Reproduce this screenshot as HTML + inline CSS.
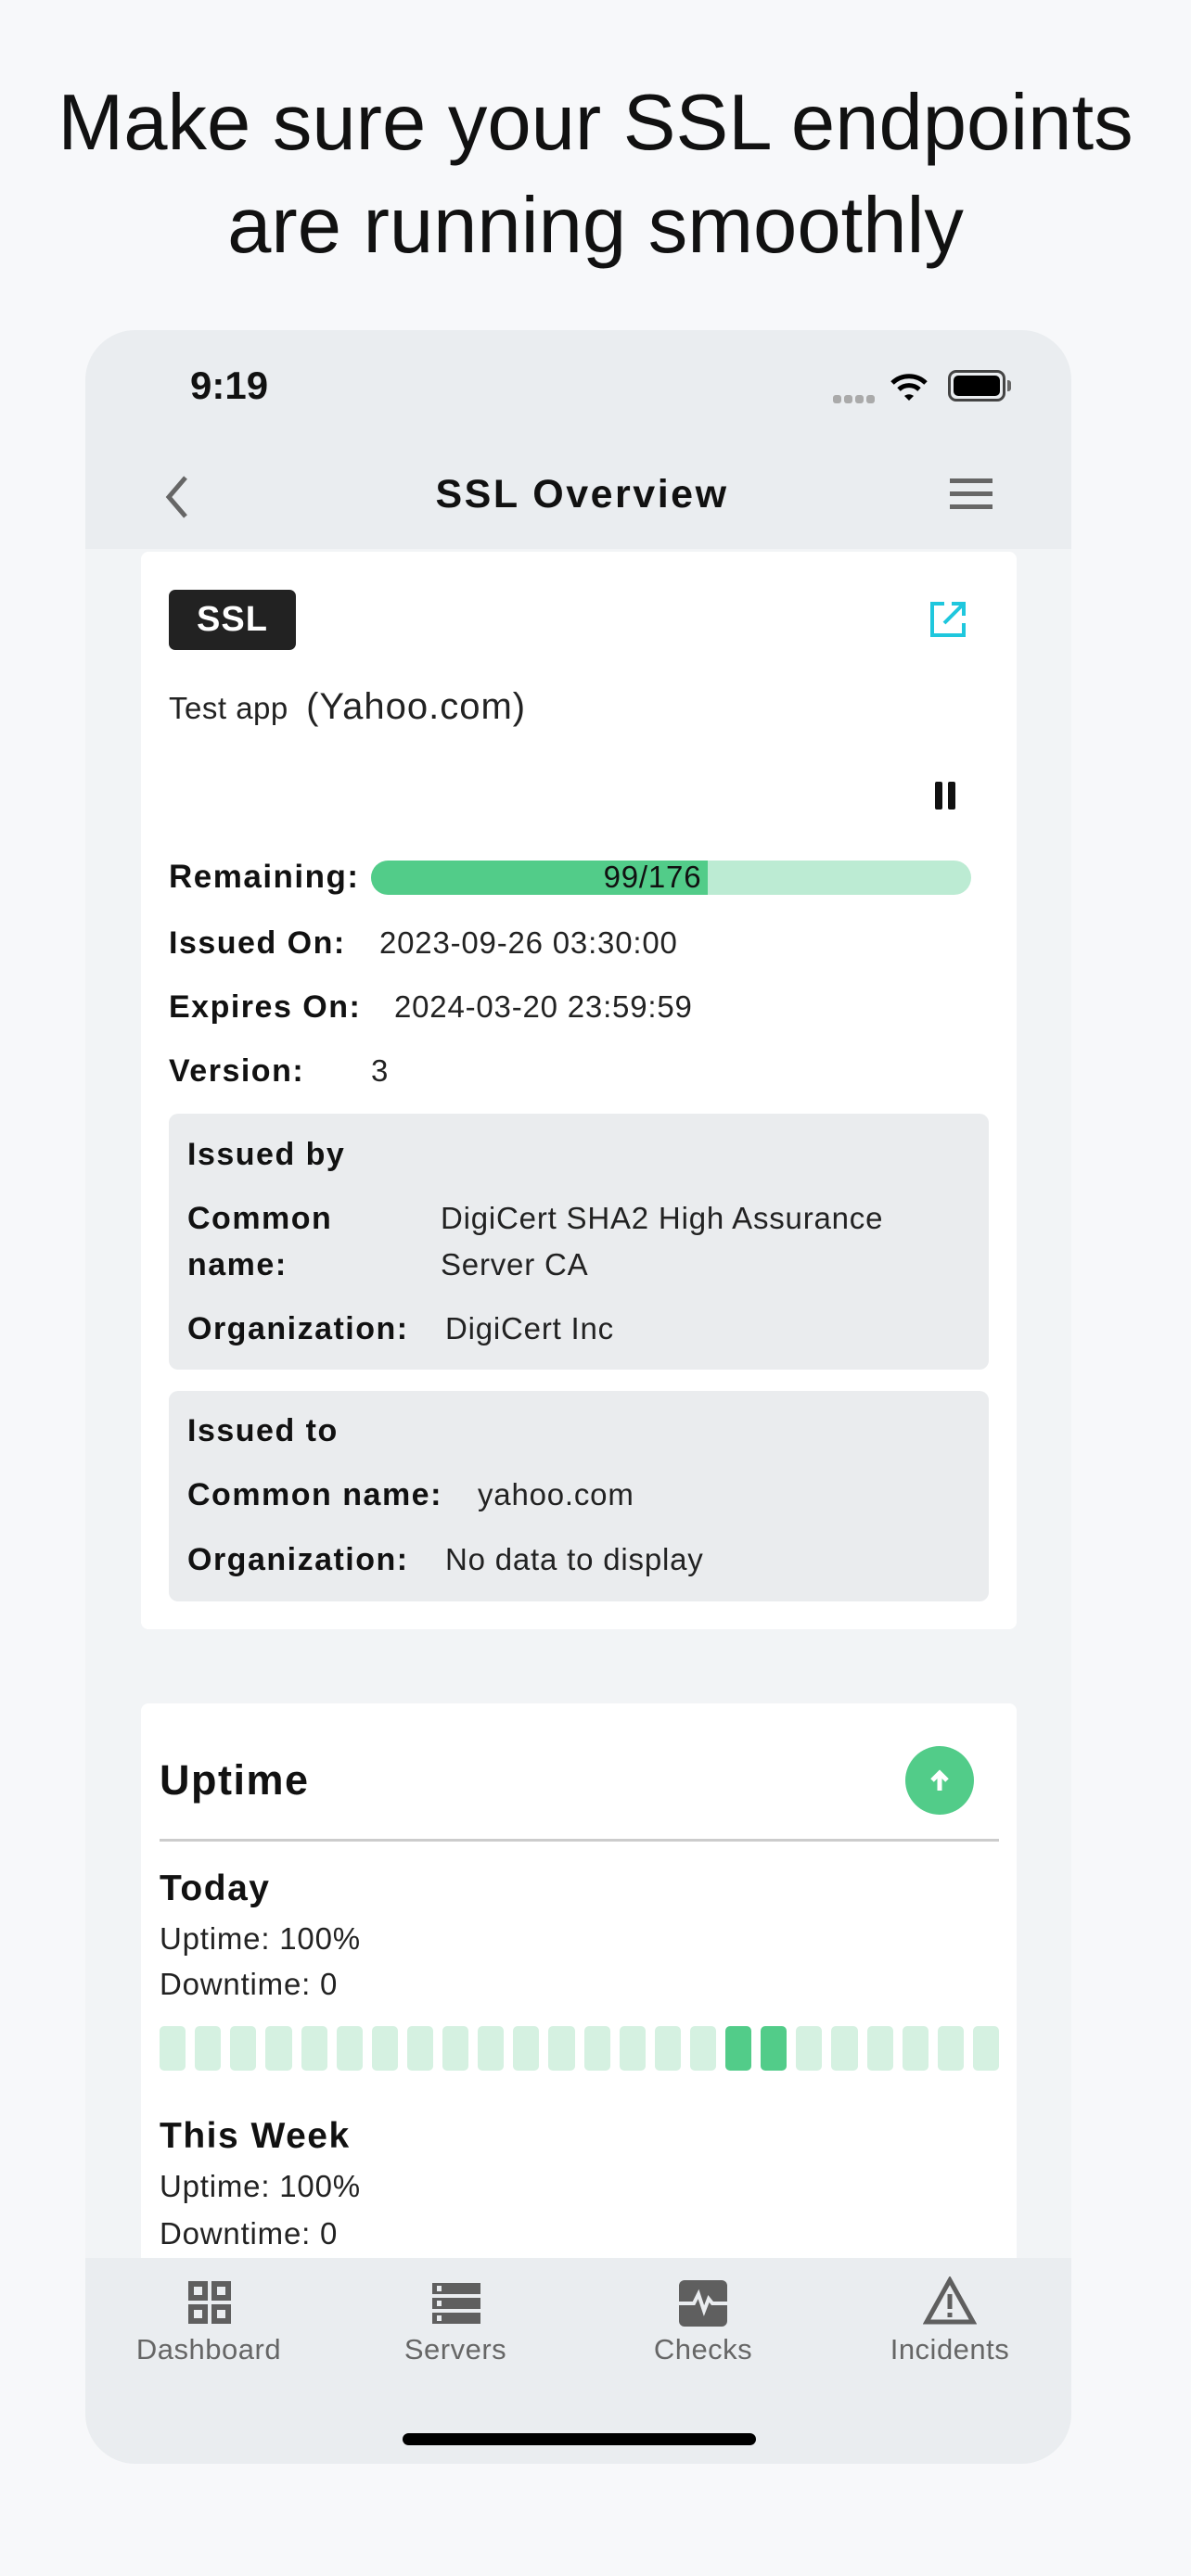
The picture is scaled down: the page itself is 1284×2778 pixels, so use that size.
<!DOCTYPE html>
<html><head><meta charset="utf-8"><style>
*{margin:0;padding:0;box-sizing:border-box}
body{width:1284px;height:2778px;background:#f7f8fa;font-family:"Liberation Sans",sans-serif;color:#111;position:relative;overflow:hidden}
.a{position:absolute;white-space:nowrap}
.h{font-size:85px;width:1284px;text-align:center;left:0;color:#111}
.phone{position:absolute;left:92px;top:356px;width:1063px;height:2301px;background:#f2f4f6;border-radius:54px;overflow:hidden}
.card{position:absolute;background:#fff;border-radius:8px}
.lb{font-weight:bold;font-size:34px;line-height:40px;color:#111;letter-spacing:1.5px}
.v{font-size:33px;line-height:40px;color:#222;letter-spacing:0.8px}
.box{position:absolute;background:#eaecee;border-radius:10px}
.tab{position:absolute;width:220px;text-align:center;font-size:31px;color:#666;top:2516px;letter-spacing:0.5px}
</style></head><body>
<div class="a h" style="top:88px;line-height:90px">Make sure your SSL endpoints</div>
<div class="a h" style="top:199px;line-height:90px">are running smoothly</div>

<div class="phone">
 <div style="position:absolute;left:0;top:0;width:1063px;height:236px;background:#eaedf0"></div>
 <div class="a" style="left:113px;top:38px;font-size:42px;font-weight:bold;line-height:44px">9:19</div>
 <div class="a" style="left:806px;top:66px;width:50px;height:10px;">
  <span style="display:inline-block;width:9px;height:9px;border-radius:3px;background:#aaa;margin-right:3px"></span><span style="display:inline-block;width:9px;height:9px;border-radius:3px;background:#aaa;margin-right:3px"></span><span style="display:inline-block;width:9px;height:9px;border-radius:3px;background:#aaa;margin-right:3px"></span><span style="display:inline-block;width:9px;height:9px;border-radius:3px;background:#aaa"></span>
 </div>
 <svg class="a" style="left:868px;top:46px" width="40" height="32" viewBox="0 0 40 32"><path d="M2 11a26 26 0 0 1 36 0" stroke="#000" stroke-width="5" fill="none"/><path d="M9 18a16 16 0 0 1 22 0" stroke="#000" stroke-width="5" fill="none"/><path d="M15 25l5 5 5-5a8 8 0 0 0-10 0z" fill="#000"/></svg>
 <div class="a" style="left:930px;top:43px;width:62px;height:34px;border:3px solid #444;border-radius:9px;padding:3px"><div style="width:100%;height:100%;background:#000;border-radius:5px"></div></div>
 <div class="a" style="left:994px;top:54px;width:4px;height:12px;background:#666;border-radius:0 3px 3px 0"></div>

 <svg class="a" style="left:84px;top:155px" width="30" height="50" viewBox="0 0 30 50"><path d="M24 4L6 25l18 21" stroke="#666" stroke-width="5" fill="none"/></svg>
 <div class="a" style="left:0;width:1063px;text-align:center;top:152px;font-size:43px;font-weight:bold;line-height:50px;letter-spacing:2.5px;padding-left:8px">SSL Overview</div>
 <div class="a" style="left:932px;top:160px;width:46px;height:5px;background:#666;box-shadow:0 14px 0 #666,0 28px 0 #666"></div>

 <div class="card" style="left:60px;top:239px;width:944px;height:1162px">
  <div class="a" style="left:30px;top:41px;width:137px;height:65px;background:#222;border-radius:7px;color:#fff;font-weight:bold;font-size:38px;line-height:65px;text-align:center;letter-spacing:1px">SSL</div>
  <svg class="a" style="left:850px;top:53px" width="40" height="40" viewBox="0 0 40 40"><path d="M16 3H3v34h34V24" stroke="#1fc7dd" stroke-width="4" fill="none"/><path d="M16 24L36 4M24 3h13v13" stroke="#1fc7dd" stroke-width="4" fill="none"/></svg>
  <div class="a" style="left:30px;top:145px;font-size:33px;line-height:44px;color:#222;letter-spacing:0.5px">Test app&nbsp;&nbsp;<span style="font-size:40px;letter-spacing:1px">(Yahoo.com)</span></div>
  <div class="a" style="left:856px;top:248px;width:8px;height:30px;background:#111;border-radius:2px"></div>
  <div class="a" style="left:870px;top:248px;width:8px;height:30px;background:#111;border-radius:2px"></div>
  <div class="a lb" style="left:30px;top:331px;font-size:35px">Remaining:</div>
  <div class="a" style="left:248px;top:333px;width:647px;height:37px;background:#bcebd3;border-radius:19px;overflow:hidden"><div style="width:363px;height:100%;background:#52cc89"></div></div>
  <div class="a v" style="left:248px;top:331px;width:647px;text-align:center;padding-right:40px;color:#111">99/176</div>
  <div class="a lb" style="left:30px;top:402px">Issued On:</div><div class="a v" style="left:257px;top:402px">2023-09-26 03:30:00</div>
  <div class="a lb" style="left:30px;top:471px">Expires On:</div><div class="a v" style="left:273px;top:471px">2024-03-20 23:59:59</div>
  <div class="a lb" style="left:30px;top:540px">Version:</div><div class="a v" style="left:248px;top:540px">3</div>
  <div class="box" style="left:30px;top:606px;width:884px;height:276px">
   <div class="a lb" style="left:20px;top:24px">Issued by</div>
   <div class="a lb" style="left:20px;top:93px">Common</div>
   <div class="a lb" style="left:20px;top:143px">name:</div>
   <div class="a v" style="left:293px;top:93px">DigiCert SHA2 High Assurance</div>
   <div class="a v" style="left:293px;top:143px">Server CA</div>
   <div class="a lb" style="left:20px;top:212px">Organization:</div><div class="a v" style="left:298px;top:212px">DigiCert Inc</div>
  </div>
  <div class="box" style="left:30px;top:905px;width:884px;height:227px">
   <div class="a lb" style="left:20px;top:23px">Issued to</div>
   <div class="a lb" style="left:20px;top:92px">Common name:</div><div class="a v" style="left:333px;top:92px">yahoo.com</div>
   <div class="a lb" style="left:20px;top:162px">Organization:</div><div class="a v" style="left:298px;top:162px">No data to display</div>
  </div>
 </div>

 <div class="card" style="left:60px;top:1481px;width:944px;height:700px">
  <div class="a" style="left:20px;top:55px;font-size:45px;font-weight:bold;line-height:56px;letter-spacing:1.5px">Uptime</div>
  <div class="a" style="left:824px;top:46px;width:74px;height:74px;border-radius:50%;background:#52cc89"></div>
  <svg class="a" style="left:846px;top:68px" width="30" height="30" viewBox="0 0 30 30"><path d="M15 26V8M7 15l8-8 8 8" stroke="#fff" stroke-width="5" fill="none"/></svg>
  <div class="a" style="left:20px;top:146px;width:905px;height:3px;background:#ccc"></div>
  <div class="a" style="left:20px;top:177px;font-size:39px;font-weight:bold;line-height:46px;letter-spacing:1.5px">Today</div>
  <div class="a v" style="left:20px;top:234px">Uptime: 100%</div>
  <div class="a v" style="left:20px;top:283px">Downtime: 0</div>
  <div class="a" style="left:20px;top:348px;width:905px;height:48px;display:flex;gap:10px">
   <i style="flex:1;background:#d5f1e1;border-radius:5px"></i><i style="flex:1;background:#d5f1e1;border-radius:5px"></i><i style="flex:1;background:#d5f1e1;border-radius:5px"></i><i style="flex:1;background:#d5f1e1;border-radius:5px"></i><i style="flex:1;background:#d5f1e1;border-radius:5px"></i><i style="flex:1;background:#d5f1e1;border-radius:5px"></i><i style="flex:1;background:#d5f1e1;border-radius:5px"></i><i style="flex:1;background:#d5f1e1;border-radius:5px"></i><i style="flex:1;background:#d5f1e1;border-radius:5px"></i><i style="flex:1;background:#d5f1e1;border-radius:5px"></i><i style="flex:1;background:#d5f1e1;border-radius:5px"></i><i style="flex:1;background:#d5f1e1;border-radius:5px"></i><i style="flex:1;background:#d5f1e1;border-radius:5px"></i><i style="flex:1;background:#d5f1e1;border-radius:5px"></i><i style="flex:1;background:#d5f1e1;border-radius:5px"></i><i style="flex:1;background:#d5f1e1;border-radius:5px"></i><i style="flex:1;background:#52cc89;border-radius:5px"></i><i style="flex:1;background:#52cc89;border-radius:5px"></i><i style="flex:1;background:#d5f1e1;border-radius:5px"></i><i style="flex:1;background:#d5f1e1;border-radius:5px"></i><i style="flex:1;background:#d5f1e1;border-radius:5px"></i><i style="flex:1;background:#d5f1e1;border-radius:5px"></i><i style="flex:1;background:#d5f1e1;border-radius:5px"></i><i style="flex:1;background:#d5f1e1;border-radius:5px"></i>
  </div>
  <div class="a" style="left:20px;top:444px;font-size:39px;font-weight:bold;line-height:46px;letter-spacing:1.5px">This Week</div>
  <div class="a v" style="left:20px;top:501px">Uptime: 100%</div>
  <div class="a v" style="left:20px;top:552px">Downtime: 0</div>
 </div>

 <div style="position:absolute;left:0;top:2079px;width:1063px;height:222px;background:#eaedf0"></div>
</div>

<svg class="a" style="left:203px;top:2460px" width="46" height="46" viewBox="0 0 46 46"><g fill="none" stroke="#5f5f5f" stroke-width="6"><rect x="3" y="3" width="15" height="15"/><rect x="28" y="3" width="15" height="15"/><rect x="3" y="28" width="15" height="15"/><rect x="28" y="28" width="15" height="15"/></g></svg>
<svg class="a" style="left:466px;top:2462px" width="52" height="44" viewBox="0 0 52 44"><g fill="#5f5f5f"><rect y="0" width="52" height="12"/><rect y="16" width="52" height="12"/><rect y="32" width="52" height="12"/></g><g fill="#eaedf0"><rect x="5" y="3" width="5" height="6"/><rect x="5" y="19" width="5" height="6"/><rect x="5" y="35" width="5" height="6"/></g></svg>
<svg class="a" style="left:732px;top:2459px" width="52" height="50" viewBox="0 0 52 50"><rect width="52" height="50" rx="6" fill="#5f5f5f"/><path d="M0 25h16l5-10 6 18 5-13 4 5h16" stroke="#eaedf0" stroke-width="4" fill="none"/></svg>
<svg class="a" style="left:995px;top:2455px" width="58" height="52" viewBox="0 0 58 52"><path d="M29 4L4 49h50z" stroke="#5f5f5f" stroke-width="5" fill="none"/><rect x="26.5" y="19" width="5" height="16" fill="#5f5f5f"/><rect x="26.5" y="39" width="5" height="5" fill="#5f5f5f"/></svg>
<div class="tab" style="left:115px">Dashboard</div>
<div class="tab" style="left:381px">Servers</div>
<div class="tab" style="left:648px">Checks</div>
<div class="tab" style="left:914px">Incidents</div>
<div class="a" style="left:434px;top:2624px;width:381px;height:13px;background:#000;border-radius:7px"></div>
</body></html>
